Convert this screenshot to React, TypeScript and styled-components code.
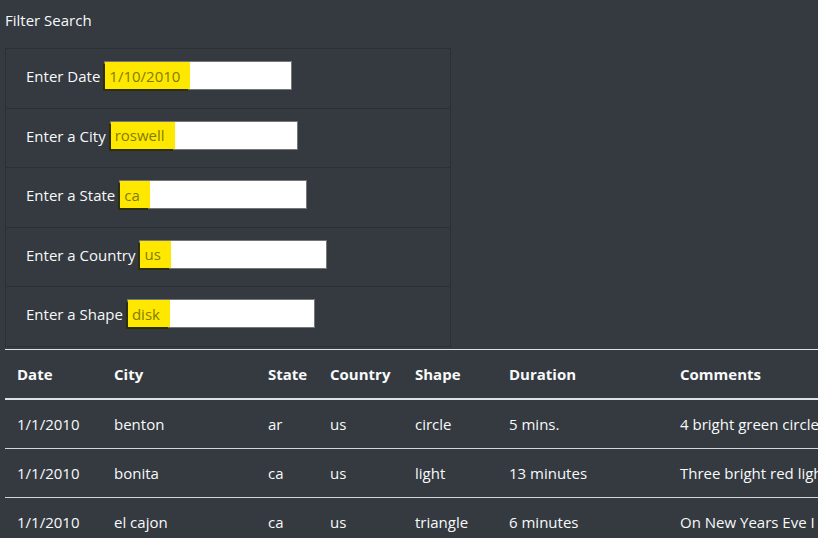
import React from 'react';
import styled, { createGlobalStyle } from 'styled-components';

const GlobalStyle = createGlobalStyle`
  html, body {
    margin: 0;
    padding: 0;
    overflow: hidden;
    background: #343a40;
  }
  body {
    font-family: "Open Sans", "Noto Sans", sans-serif;
    font-size: 15px;
    line-height: 24px;
    color: #f8f9fa;
  }
`;

const Page = styled.div`
  padding: 8px 0 0 5px;
`;

const Title = styled.div`
  margin-bottom: 16px;
`;

const FilterPanel = styled.ul`
  list-style: none;
  margin: 0;
  padding: 0;
  width: 446px;
  box-sizing: border-box;
  border: 1px solid #2b3035;
  border-bottom: none;
`;

const FilterRow = styled.li`
  display: flex;
  align-items: flex-start;
  height: 59.6px;
  box-sizing: border-box;
  padding: 12px 20px 0;
  border-bottom: 1px solid #2b3035;
`;

const Label = styled.label`
  margin-right: 4px;
  line-height: 30px;
  white-space: nowrap;
`;

const FakeInput = styled.div`
  display: flex;
  width: 188px;
  height: 29px;
  box-sizing: border-box;
  border: 1px solid #767676;
  background: #ffffff;
`;

const Highlight = styled.span`
  display: flex;
  align-items: center;
  padding: 0 10px 0 4px;
  background: #ffe800;
  color: #7f7d00;
  box-shadow: -2px 2px 0 #2f2f05;
`;

const Table = styled.table`
  border-collapse: collapse;
  table-layout: fixed;
  width: 1100px;
  margin-top: 2px;
`;

const HeadCell = styled.th<{ w: number }>`
  width: ${p => p.w}px;
  box-sizing: border-box;
  text-align: left;
  font-weight: 700;
  padding: 12px;
  border-top: 1px solid #dee2e6;
  border-bottom: 2px solid #dee2e6;
  white-space: nowrap;
`;

const Cell = styled.td`
  box-sizing: border-box;
  padding: 12px;
  border-top: 1px solid #d3d6d9;
  white-space: nowrap;
  overflow: hidden;
`;

const filters = [
  { label: 'Enter Date', value: '1/10/2010' },
  { label: 'Enter a City', value: 'roswell' },
  { label: 'Enter a State', value: 'ca' },
  { label: 'Enter a Country', value: 'us' },
  { label: 'Enter a Shape', value: 'disk' },
];

const columns = [
  { title: 'Date', w: 97 },
  { title: 'City', w: 154 },
  { title: 'State', w: 62 },
  { title: 'Country', w: 85 },
  { title: 'Shape', w: 94 },
  { title: 'Duration', w: 171 },
  { title: 'Comments', w: 437 },
];

const rows = [
  ['1/1/2010', 'benton', 'ar', 'us', 'circle', '5 mins.', '4 bright green circles high in the sky'],
  ['1/1/2010', 'bonita', 'ca', 'us', 'light', '13 minutes', 'Three bright red lights witnessed'],
  ['1/1/2010', 'el cajon', 'ca', 'us', 'triangle', '6 minutes', 'On New Years Eve I went outside'],
];

const App: React.FC = () => {
  return (
    <Page>
      <GlobalStyle />
      <Title>Filter Search</Title>
      <FilterPanel>
        {filters.map(f => (
          <FilterRow key={f.label}>
            <Label>{f.label}</Label>
            <FakeInput>
              <Highlight>{f.value}</Highlight>
            </FakeInput>
          </FilterRow>
        ))}
      </FilterPanel>
      <Table>
        <thead>
          <tr>
            {columns.map(c => (
              <HeadCell key={c.title} w={c.w}>{c.title}</HeadCell>
            ))}
          </tr>
        </thead>
        <tbody>
          {rows.map((r, i) => (
            <tr key={i}>
              {r.map((v, j) => (
                <Cell key={j}>{v}</Cell>
              ))}
            </tr>
          ))}
        </tbody>
      </Table>
    </Page>
  );
};

export default App;
